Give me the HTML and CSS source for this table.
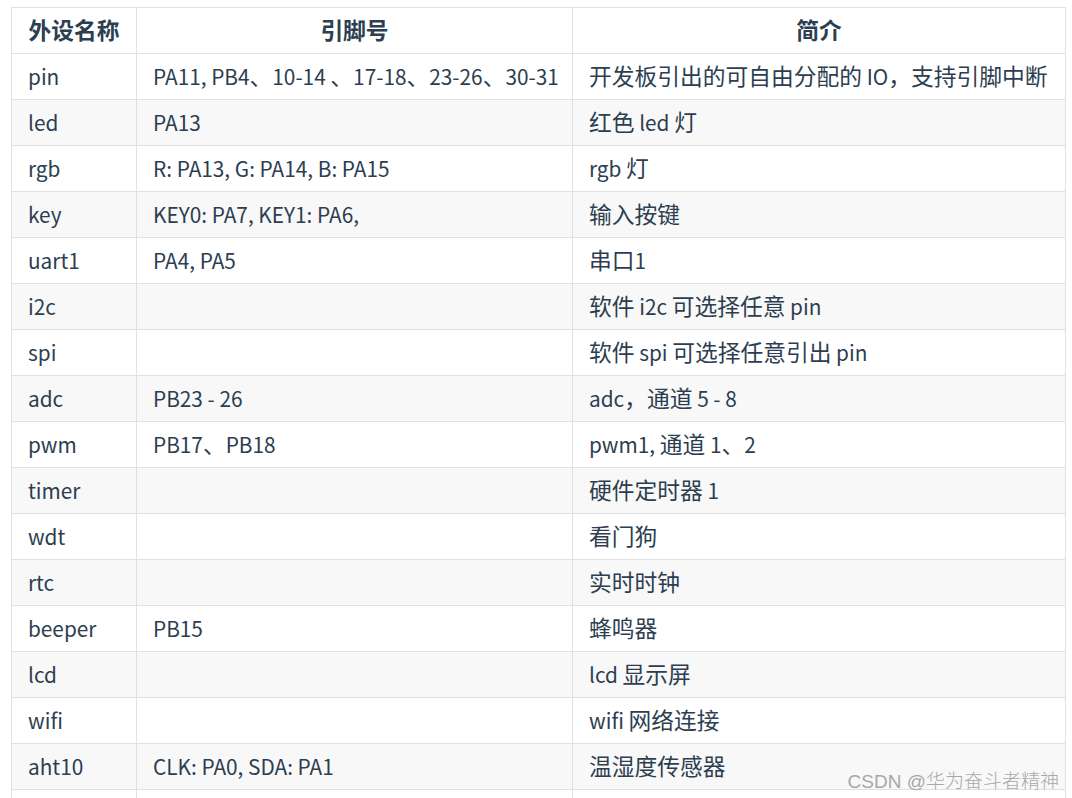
FILE: index.html
```html
<!DOCTYPE html>
<html lang="zh">
<head>
<meta charset="utf-8">
<title>外设</title>
<link rel="stylesheet" href="styles.css">
</head>
<body>
<div class="wrap">
<table class="pins">
<colgroup><col class="c1"><col class="c2"><col class="c3"></colgroup>
<thead>
<tr><th><span class="han">外设名称</span></th><th><span class="han">引脚号</span></th><th><span class="han">简介</span></th></tr>
</thead>
<tbody>
<tr><td>pin</td><td>PA11, PB4<span class="han">、</span>10-14 <span class="han">、</span>17-18<span class="han">、</span>23-26<span class="han">、</span>30-31</td><td><span class="han">开发板引出的可自由分配的</span> IO<span class="han">，支持引脚中断</span></td></tr>
<tr><td>led</td><td>PA13</td><td><span class="han">红色</span> led <span class="han">灯</span></td></tr>
<tr><td>rgb</td><td>R: PA13, G: PA14, B: PA15</td><td>rgb <span class="han">灯</span></td></tr>
<tr><td>key</td><td>KEY0: PA7, KEY1: PA6,</td><td><span class="han">输入按键</span></td></tr>
<tr><td>uart1</td><td>PA4, PA5</td><td><span class="han">串口</span>1</td></tr>
<tr><td>i2c</td><td></td><td><span class="han">软件</span> i2c <span class="han">可选择任意</span> pin</td></tr>
<tr><td>spi</td><td></td><td><span class="han">软件</span> spi <span class="han">可选择任意引出</span> pin</td></tr>
<tr><td>adc</td><td>PB23 - 26</td><td>adc<span class="han">，通道</span> 5 - 8</td></tr>
<tr><td>pwm</td><td>PB17<span class="han">、</span>PB18</td><td>pwm1, <span class="han">通道</span> 1<span class="han">、</span>2</td></tr>
<tr><td>timer</td><td></td><td><span class="han">硬件定时器</span> 1</td></tr>
<tr><td>wdt</td><td></td><td><span class="han">看门狗</span></td></tr>
<tr><td>rtc</td><td></td><td><span class="han">实时时钟</span></td></tr>
<tr><td>beeper</td><td>PB15</td><td><span class="han">蜂鸣器</span></td></tr>
<tr><td>lcd</td><td></td><td>lcd <span class="han">显示屏</span></td></tr>
<tr><td>wifi</td><td></td><td>wifi <span class="han">网络连接</span></td></tr>
<tr><td>aht10</td><td>CLK: PA0, SDA: PA1</td><td><span class="han">温湿度传感器</span></td></tr>
<tr><td>&nbsp;</td><td></td><td></td></tr>
</tbody>
</table>
<div class="watermark">CSDN @华为奋斗者精神</div>
</div>
</body>
</html>
```
FILE: styles.css
```css
html, body {
  margin: 0;
  padding: 0;
  background: #ffffff;
  overflow: hidden;
}
body {
  padding: 7px 0 0 11px;
  font-family: "Noto Sans CJK SC", "Noto Sans", sans-serif;
  color: #2c3e50;
}
.wrap {
  position: relative;
  width: 1054px;
}
.pins {
  border-collapse: collapse;
  table-layout: fixed;
  width: 1054px;
  font-size: 20.8px;
}
.c1 { width: 125px; }
.c2 { width: 436px; }
.c3 { width: 493px; }
.pins th, .pins td {
  border: 1px solid #dfe2e5;
  height: 46px;
  padding: 0 16px;
  box-sizing: border-box;
  white-space: nowrap;
  overflow: hidden;
  line-height: 1;
}
.han {
  font-size: 22.75px;
}
.pins th {
  font-weight: 700;
  text-align: center;
  background: #ffffff;
}
.pins td {
  text-align: left;
}
.pins tbody tr:nth-child(even) td {
  background: #f8f8f8;
}
.watermark {
  position: absolute;
  right: 6px;
  top: 759px;
  font-family: "Liberation Sans", "Noto Sans CJK SC", sans-serif;
  font-weight: 300;
  font-size: 19px;
  color: #a8a8a8;
  white-space: nowrap;
}
```
